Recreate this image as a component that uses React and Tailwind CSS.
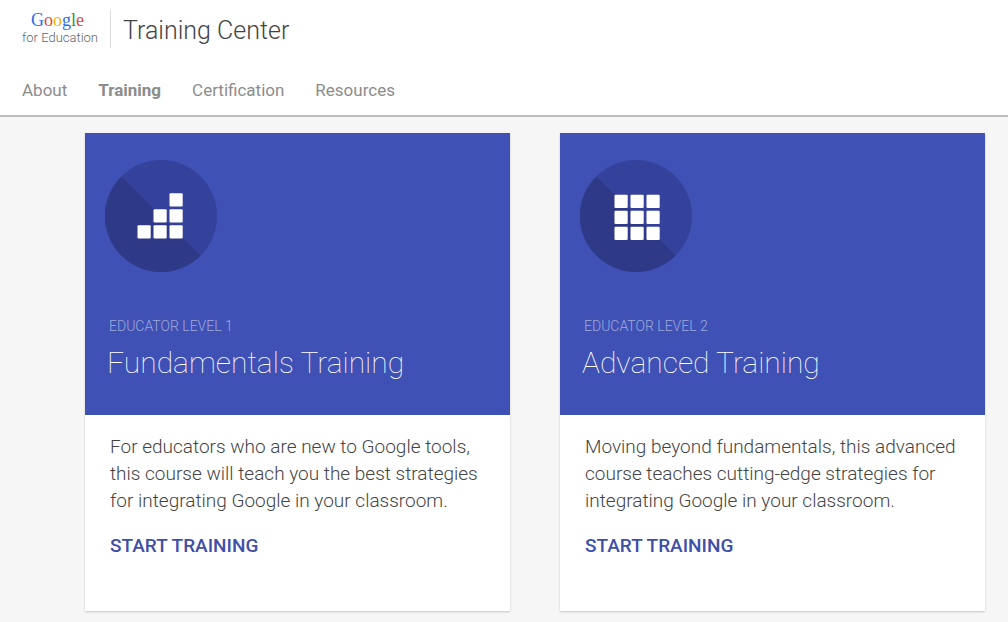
import React from 'react';

const navItems = [
  { label: 'About', href: '#about' },
  { label: 'Training', href: '#training', current: true },
  { label: 'Certification', href: '#certification' },
  { label: 'Resources', href: '#resources' },
];

const courses = [
  {
    level: 'EDUCATOR LEVEL 1',
    title: 'Fundamentals Training',
    text: 'For educators who are new to Google tools, this course will teach you the best strategies for integrating Google in your classroom.',
    href: '#fundamentals',
    squares: [[65, 33.5], [49, 49.5], [65, 49.5], [33, 65.5], [49, 65.5], [65, 65.5]],
  },
  {
    level: 'EDUCATOR LEVEL 2',
    title: 'Advanced Training',
    text: 'Moving beyond fundamentals, this advanced course teaches cutting-edge strategies for integrating Google in your classroom.',
    href: '#advanced',
    squares: [
      [35, 35], [51, 35], [67, 35],
      [35, 51], [51, 51], [67, 51],
      [35, 67], [51, 67], [67, 67],
    ],
  },
];

const Logo = () => (
  <a href="#home" className="flex h-[38px] flex-col self-start pr-3 border-r border-[#dcdcdc]">
    <span className="pl-[9px] font-['Liberation_Serif',serif] text-lg leading-5 text-[#2a6ef0]">
      G<span className="text-[#dd4b39]">o</span>
      <span className="text-[#f5b400]">o</span>
      <span className="text-[#2a6ef0]">g</span>
      <span className="text-[#1f9d4d]">l</span>
      <span className="text-[#dd4b39]">e</span>
    </span>
    <span className="text-[13px] leading-4 font-light text-[#666]">for Education</span>
  </a>
);

const CourseIcon = ({ squares }) => (
  <svg viewBox="0 0 112 112" className="size-28" aria-hidden="true">
    <circle cx="56" cy="56" r="56" fill="#35429b" />
    <path d="M16.4 16.4A56 56 0 0 0 95.6 95.6Z" fill="#2e3a87" />
    {squares.map(([x, y]) => (
      <rect key={`${x}-${y}`} x={x - 0.5} y={y - 0.2} width="13.2" height="13.2" rx="1" fill="#fff" />
    ))}
  </svg>
);

const CourseCard = ({ course }) => (
  <article className="bg-white shadow-[0_1px_2px_rgba(0,0,0,0.2)]">
    <div className="bg-[#3f51b5] pt-[27px] pb-[33px] text-white">
      <div className="pl-5">
        <CourseIcon squares={course.squares} />
      </div>
      <p className="mt-11 pl-6 text-sm leading-5 font-light text-[#9fa8da]">{course.level}</p>
      <h2 className="mt-2 pl-[22px] text-3xl leading-[38px] font-thin">{course.title}</h2>
    </div>
    <div className="pt-[18px] px-[25px] pb-[52px]">
      <p className="text-[19px] leading-[27px] font-light text-[#444]">{course.text}</p>
      <a href={course.href} className="mt-[18px] inline-block text-[19px] leading-[27px] font-medium text-[#3f4fa8]">
        START TRAINING
      </a>
    </div>
  </article>
);

const App = () => (
  <div className="min-h-screen bg-[#f6f6f6] font-[Roboto,sans-serif]">
    <header className="bg-white border-b-2 border-[#bdbdbd] pt-[10px] pb-[11px]">
      <div className="flex px-[22px]">
        <Logo />
        <h1 className="pl-3 text-[25px] leading-[42px] font-light text-[#444]">Training Center</h1>
      </div>
      <nav className="mt-[25px] px-[22px]" aria-label="Main navigation">
        <ul className="flex gap-[31px] text-[17px] leading-[27px] text-[#8c8c8c]">
          {navItems.map((item) => (
            <li key={item.label}>
              <a href={item.href} aria-current={item.current ? 'page' : undefined} className={item.current ? 'font-bold' : ''}>
                {item.label}
              </a>
            </li>
          ))}
        </ul>
      </nav>
    </header>
    <main className="grid grid-cols-2 gap-[50px] pt-4 pr-[23px] pb-[11px] pl-[85px]">
      {courses.map((course) => (
        <CourseCard key={course.title} course={course} />
      ))}
    </main>
  </div>
);

export default App;
